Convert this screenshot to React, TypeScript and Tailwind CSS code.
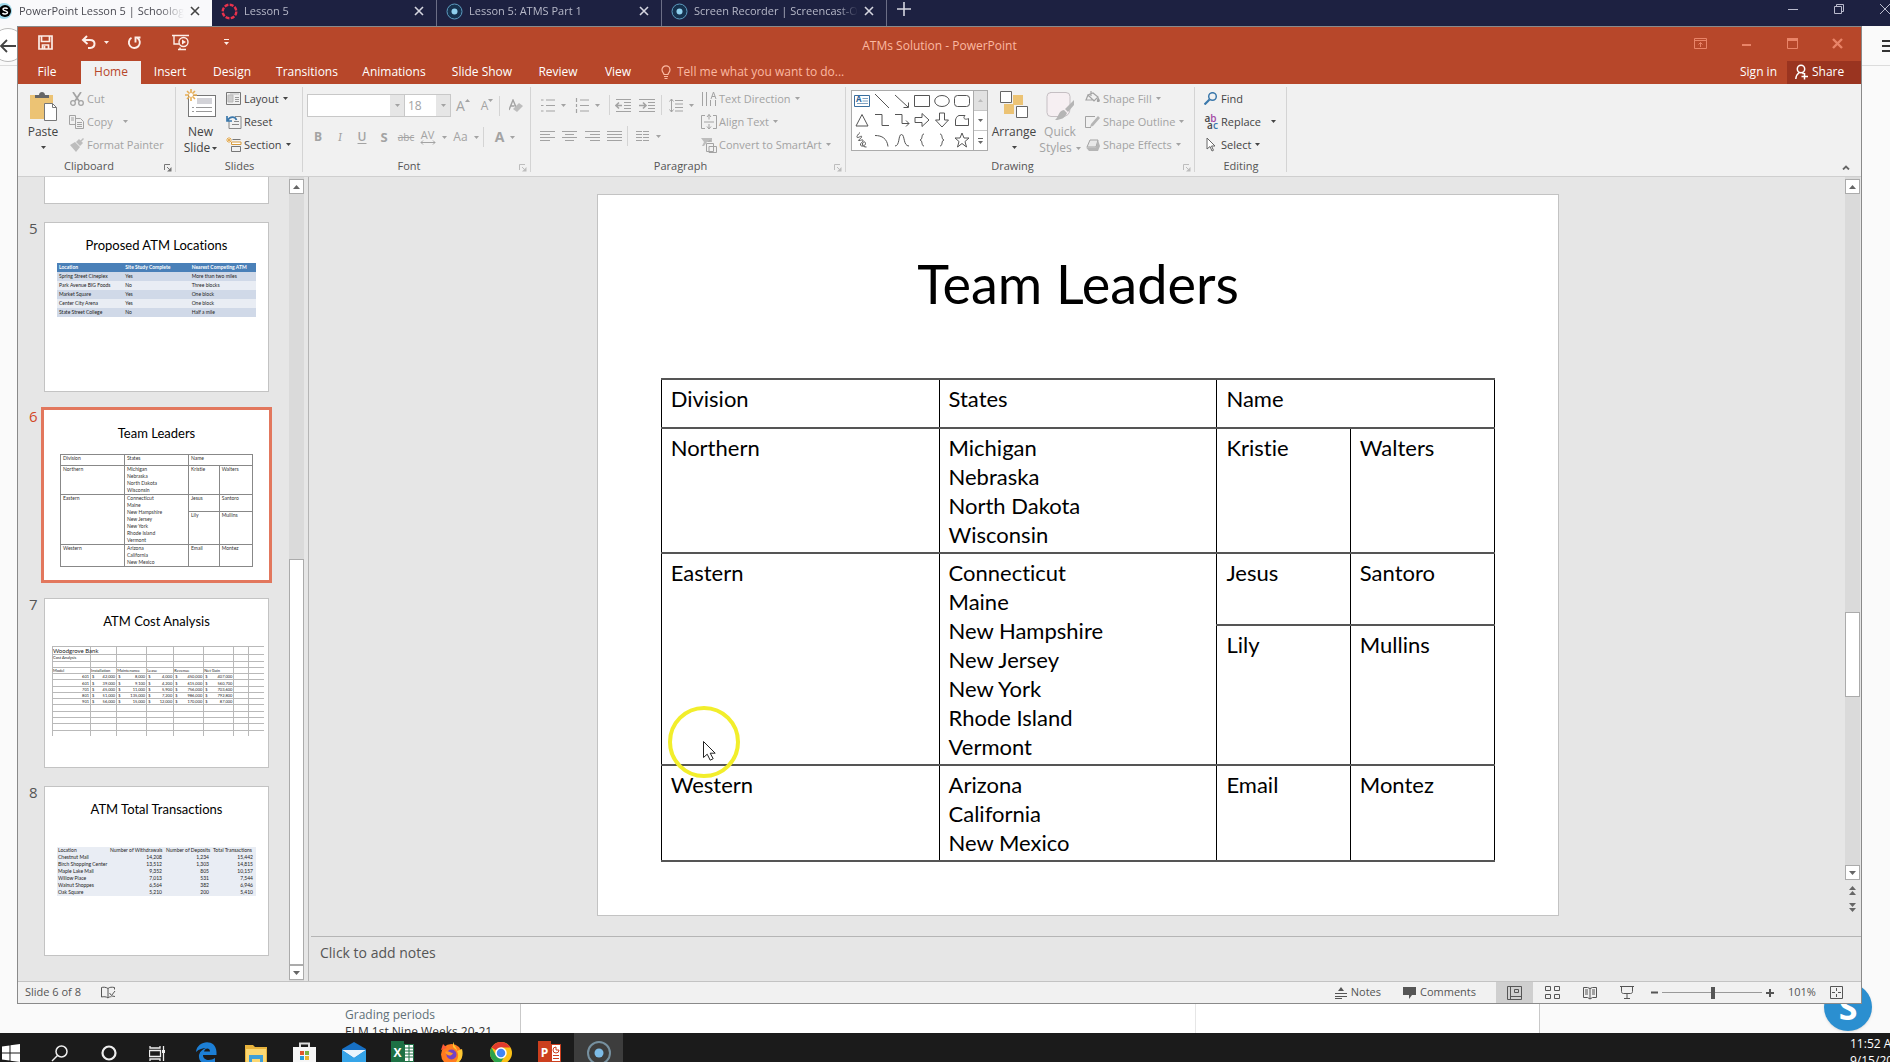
import React from "react";

type Kids = { children?: React.ReactNode };

/* ---------- drawing helpers ---------- */

function Svg({ w, h, children, className = "" }: Kids & { w: number; h: number; className?: string }) {
  return (
    <svg
      width={w}
      height={h}
      viewBox={`0 0 ${w} ${h}`}
      fill="none"
      stroke="currentColor"
      aria-hidden="true"
      className={`shrink-0 ${className}`}
    >
      {children}
    </svg>
  );
}

const Caret = ({ className = "" }: { className?: string }) => (
  <Svg w={5} h={3} className={className}>
    <path d="M0 0h5L2.500 3z" fill="currentColor" stroke="none" />
  </Svg>
);

const Launcher = ({ dim = false }: { dim?: boolean }) => (
  <button type="button" aria-label="More options" className={`absolute right-1 bottom-1 ${dim ? "text-[#bdbdbd]" : "text-[#777]"}`}>
    <Svg w={8} h={8}>
      <path d="M.5 6V.5H6M3 3l3 3" />
      <path d="M7.500 3v4.500H3z" fill="currentColor" stroke="none" />
    </Svg>
  </button>
);

/* ---------- browser chrome ---------- */

const ScreencastIcon = () => (
  <Svg w={17} h={17}>
    <circle cx="8.500" cy="8.500" r="7.500" fill="#16324f" stroke="#5d9cc0" />
    <circle cx="8.500" cy="8.500" r="3" fill="#8fd0ee" stroke="none" />
  </Svg>
);

function BrowserTab({ icon, title, active = false }: { icon: React.ReactNode; title: string; active?: boolean }) {
  return (
    <div
      className={`flex h-full items-center pb-1 ${
        active ? "w-[212px] bg-[#f9f9fb] text-[#4a4a52]" : "w-[225px] border-r border-[#6b6e86] pl-[9px] text-[#b6b8c8]"
      }`}
    >
      {icon}
      <button
        type="button"
        className={`ml-1.5 flex-1 overflow-hidden text-left text-[11px] leading-4 whitespace-nowrap ${
          active ? "[mask-image:linear-gradient(to_right,black_85%,transparent)]" : "[mask-image:linear-gradient(to_right,black_88%,transparent)]"
        }`}
      >
        {title}
      </button>
      <button type="button" aria-label={`Close ${title}`} className={`mr-3 ml-1.5 ${active ? "text-[#444]" : "text-[#d5d6e0]"}`}>
        <Svg w={10} h={10}>
          <path d="M1 1l8 8M9 1L1 9" strokeWidth="1.600" />
        </Svg>
      </button>
    </div>
  );
}

function BrowserTabs() {
  return (
    <header className="flex h-[26px] shrink-0 items-stretch bg-[#1d2141]">
      <BrowserTab
        active
        title="PowerPoint Lesson 5 | Schoology"
        icon={
          <Svg w={13} h={16}>
            <circle cx="4" cy="8" r="8" fill="#9fd8ea" stroke="none" />
            <circle cx="5" cy="8" r="6" fill="#000" stroke="none" />
            <path d="M7.500 6C7 5 3 4.500 3 6.300S7.500 7.700 7.500 9.500 3.500 11.500 2.500 10" stroke="#fff" strokeWidth="1.500" />
          </Svg>
        }
      />
      <BrowserTab
        title="Lesson 5"
        icon={
          <Svg w={17} h={17}>
            <circle cx="8.500" cy="8.500" r="6.800" stroke="#e8324c" strokeWidth="2.400" strokeDasharray="4 1.340" />
          </Svg>
        }
      />
      <BrowserTab title="Lesson 5: ATMS Part 1" icon={<ScreencastIcon />} />
      <BrowserTab title="Screen Recorder | Screencast-O-Matic" icon={<ScreencastIcon />} />
      <button type="button" aria-label="New tab" className="mb-2 ml-2.5 text-[#d5d6e0]">
        <Svg w={14} h={14}>
          <path d="M7 0v14M0 7h14" strokeWidth="1.600" />
        </Svg>
      </button>
      <div className="ml-auto flex items-center gap-9 overflow-hidden pb-2 text-[#b9bbcd]">
        <button type="button" aria-label="Minimize browser">
          <Svg w={10} h={10}>
            <path d="M0 5.500h10" />
          </Svg>
        </button>
        <button type="button" aria-label="Restore browser">
          <Svg w={10} h={10}>
            <path d="M.5 2.500h7v7h-7zM2.500 2.500v-2h7v7h-2" />
          </Svg>
        </button>
        <button type="button" aria-label="Close browser">
          <Svg w={10} h={10}>
            <path d="M0 0l10 10M10 0L0 10" />
          </Svg>
        </button>
      </div>
    </header>
  );
}

/* ---------- PowerPoint title bar and tabs ---------- */

function TitleBar() {
  return (
    <div className="relative flex h-[34px] items-center bg-[#b7472a] text-[#fdeee8]">
      <div className="flex items-center pb-[3px] pl-5">
        <button type="button" aria-label="Save">
          <Svg w={15} h={15}>
            <path d="M1 1h13v13H1zM3.500 1v5.500h8V1M4.500 14v-4h6v4M6.500 14v-3" strokeWidth="1.700" />
          </Svg>
        </button>
        <button type="button" aria-label="Undo" className="ml-7">
          <Svg w={15} h={15}>
            <path d="M6 1L2 5l4.500 4M2.500 5H9c6 0 6 7.500 0 8H7" strokeWidth="2" />
          </Svg>
        </button>
        <button type="button" aria-label="Undo history" className="ml-2">
          <Caret />
        </button>
        <button type="button" aria-label="Repeat" className="ml-[18px]">
          <Svg w={15} h={15}>
            <path d="M4.500 2.800A5.500 5.500 0 1 0 10.500 3M8.500 7.500V2.500h5" strokeWidth="1.900" />
          </Svg>
        </button>
        <button type="button" aria-label="Start from beginning" className="ml-[30px]">
          <Svg w={18} h={17}>
            <path d="M0 1.500h17M2 2v8h5M6 15.500h8M8 13.500v2" strokeWidth="1.400" />
            <circle cx="11.500" cy="8" r="4.500" strokeWidth="1.400" />
            <path d="M10 5.500v5l4-2.500z" fill="currentColor" stroke="none" />
          </Svg>
        </button>
        <button type="button" aria-label="Customize Quick Access Toolbar" className="ml-[34px]">
          <Svg w={5} h={7}>
            <path d="M0 .5h5" />
            <path d="M0 3h5L2.500 6z" fill="currentColor" stroke="none" />
          </Svg>
        </button>
      </div>
      <p className="pointer-events-none absolute inset-x-0 top-[11px] text-center text-[12px] leading-4 text-[#fbb9a2]">
        ATMs Solution - PowerPoint
      </p>
      <div className="ml-auto flex items-center gap-[34px] pr-[18px] pb-0.5 text-[#e98468]">
        <button type="button" aria-label="Ribbon display options">
          <Svg w={13} h={11}>
            <path d="M.5 .5h12v10H.5zM.5 2.500h12M6.500 9V4.500M4.500 6.500l2-2 2 2" />
          </Svg>
        </button>
        <button type="button" aria-label="Minimize">
          <Svg w={12} h={11}>
            <path d="M1 7h9" strokeWidth="2" />
          </Svg>
        </button>
        <button type="button" aria-label="Maximize">
          <Svg w={11} h={11}>
            <path d="M.5 .5h10v10H.5z" />
            <path d="M0 1.500h11" strokeWidth="3" />
          </Svg>
        </button>
        <button type="button" aria-label="Close">
          <Svg w={11} h={11}>
            <path d="M1 1l9 9M10 1L1 10" strokeWidth="2.400" />
          </Svg>
        </button>
      </div>
    </div>
  );
}

function RibbonTabs() {
  const tab = "flex h-full items-center justify-center";
  return (
    <nav className="flex h-6 items-stretch bg-[#b7472a] text-[12px] text-white">
      <button type="button" className={`${tab} ml-[3px] w-[52px]`}>File</button>
      <button type="button" className={`${tab} ml-2 w-[60px] bg-[#f1f1f1] text-[#b7472a]`}>Home</button>
      <button type="button" className={`${tab} w-[58px]`}>Insert</button>
      <button type="button" className={`${tab} w-[66px]`}>Design</button>
      <button type="button" className={`${tab} w-[84px]`}>Transitions</button>
      <button type="button" className={`${tab} w-[90px]`}>Animations</button>
      <button type="button" className={`${tab} w-[86px]`}>Slide Show</button>
      <button type="button" className={`${tab} w-[66px]`}>Review</button>
      <button type="button" className={`${tab} w-[54px]`}>View</button>
      <label className="ml-4 flex items-center gap-1.5 text-[#fbb9a2]">
        <Svg w={10} h={14}>
          <path d="M3 9.500C3 8 1 7.500 1 4.800a4 4 0 0 1 8 0C9 7.500 7 8 7 9.500zM3 11.500h4M3.500 13.500h3" strokeWidth="1.200" />
        </Svg>
        <input
          type="text"
          aria-label="Tell me what you want to do"
          placeholder="Tell me what you want to do..."
          className="w-48 bg-transparent outline-none placeholder:text-[#fbb9a2] placeholder:opacity-100"
        />
      </label>
      <button type="button" className="ml-auto px-2.5">Sign in</button>
      <button type="button" className="flex w-[74px] items-center gap-1 bg-[#9a3420] pl-2">
        <Svg w={13} h={16}>
          <circle cx="6" cy="5" r="3.700" strokeWidth="1.500" />
          <path d="M.8 15c.2-3.500 1.500-5 3.400-6.500M7.500 9l1 1M9.500 9v6.500M6.500 12.500h6.500" strokeWidth="1.500" />
        </Svg>
        Share
      </button>
    </nav>
  );
}

/* ---------- ribbon ---------- */

function Group({ label, width, children, launcher }: Kids & { label: string; width: string; launcher?: "on" | "dim" }) {
  return (
    <section aria-label={label} className={`relative flex h-full shrink-0 flex-col ${width}`}>
      <div className="flex h-[71px] items-stretch">{children}</div>
      <h2 className={`text-center leading-5 text-[#555] ${launcher ? "pr-4" : ""}`}>{label}</h2>
      {launcher && <Launcher dim={launcher === "dim"} />}
      <span className="absolute top-0 right-0 bottom-1 w-px bg-[#d4d4d4]" />
    </section>
  );
}

function Small({ icon, label, off = false, caret = false, wide = false }: { icon: React.ReactNode; label: string; off?: boolean; caret?: boolean; wide?: boolean }) {
  return (
    <button type="button" className={`flex h-[23px] items-center whitespace-nowrap ${off ? "text-[#a3a3a3]" : "text-[#444]"}`}>
      <span className="mr-0.5 flex w-[17px] justify-center">{icon}</span>
      {label}
      {caret && <Caret className={wide ? "ml-2.5" : "ml-1"} />}
    </button>
  );
}

const Sep = () => <span className="h-5 w-px bg-[#d4d4d4]" />;

function Tool({ label, width, children, caret = false }: Kids & { label: string; width: string; caret?: boolean }) {
  return (
    <button type="button" aria-label={label} className={`flex h-5 items-center justify-center ${width}`}>
      {children}
      {caret && <Caret className="ml-1.5" />}
    </button>
  );
}

const Lines = ({ d }: { d: string }) => (
  <Svg w={15} h={12}>
    <path d={d} />
  </Svg>
);

const galleryShapes: React.ReactNode[] = [
  <g key="a"><path d="M.5 2.500h15v11H.5z" stroke="#3b6f9e" /><path d="M8.500 5.500H14M8.500 8H14M3 10.500h11" stroke="#7fa3c4" /><text x="2" y="9" fontSize="8" fontWeight="700" fill="#2b5f93" stroke="none">A</text></g>,
  <path key="b" d="M1 1l14 14" />,
  <path key="c" d="M1 2l13 12M14.500 9.500v5h-5" />,
  <path key="d" d="M.5 2.500h15v11H.5z" />,
  <ellipse key="e" cx="8" cy="8" rx="7.300" ry="5.500" />,
  <rect key="f" x=".5" y="2.500" width="15" height="11" rx="3" />,
  <path key="g" d="M8 2.500L14 14H2z" />,
  <path key="h" d="M1 2.500h7v11h7" />,
  <path key="i" d="M1 2.500h7v9h7M12 8.500l3 3-3 3" />,
  <path key="j" d="M1 5.500h7V1.500L15 8l-7 6.500v-4H1z" />,
  <path key="k" d="M5.500 1v7H1.500L8 15l6.500-7h-4V1z" />,
  <path key="l" d="M5 3.500h6C8 7 12 8 14.500 6.500v7h-13V8C2 6 3 4 5 3.500z" />,
  <path key="m" d="M6 .5C3 3 2 6 4 5.500S8 3 7.500 5 3 8.500 5 8.500s4-1.500 4 0-3 2.500-2.500 4.500 5 1 5-1.500-3-2-3 .5 2 3 4 3" />,
  <path key="n" d="M1 3.500c7 0 12 3 13 11" />,
  <path key="o" d="M1 14C6 14 4 2.500 7.500 2.500S9 14 15 14" />,
  <path key="p" d="M10 2C7 2 9 7.500 6 8c3 .5 1 6 4 6" />,
  <path key="q" d="M6 2c3 0 1 5.500 4 6-3 .5-1 6-4 6" />,
  <path key="r" d="M8 1l2 5h5l-4 3.500 1.500 5.500L8 11.500 3.500 15 5 9.500 1 6h5z" />,
];

function Ribbon() {
  return (
    <div className="flex h-[93px] shrink-0 items-start border-b border-[#cfcfcf] bg-[#f1f1f1] pt-[3px] text-[11px] leading-4 text-[#444]">
      <Group label="Clipboard" width="w-[158px]" launcher="on">
        <button type="button" className="flex w-[50px] flex-col items-center pt-1">
          <Svg w={29} h={31}>
            <rect x="1" y="4" width="23" height="24" fill="#ecc374" stroke="none" />
            <path d="M6 7V4h4c0-4 6-4 6 0h4v3z" fill="#666" stroke="none" />
            <path d="M15.500 12.500h8l4 4v13h-12z" fill="#fff" stroke="#777" />
            <path d="M23.500 12.500v4h4" stroke="#777" />
          </Svg>
          <span className="mt-0.5 text-[12px]">Paste</span>
          <Caret className="mt-1.5" />
        </button>
        <div className="flex flex-col">
          <Small off label="Cut" icon={<Svg w={14} h={14}><path d="M3 0l6 9M11 0L5 9" strokeWidth="1.700" /><circle cx="3" cy="11" r="2.300" strokeWidth="1.300" /><circle cx="11" cy="11" r="2.300" strokeWidth="1.300" /></Svg>} />
          <Small off caret wide label="Copy" icon={<Svg w={15} h={14}><path d="M.5 .5h6v9h-6zM6.500 3.500h5l3 3v7h-8zM8 7.500h5M8 9.500h5M8 11.500h5M2 3h3M2 5h3" /></Svg>} />
          <Small off label="Format Painter" icon={<Svg w={14} h={14}><path d="M0 7l5-3 5 5-4 5zM6 4l3-3 4 4-3 3zM10 3l3-3 1 1-3 3z" fill="#bdbdbd" stroke="none" /></Svg>} />
        </div>
      </Group>
      <Group label="Slides" width="w-[127px]">
        <button type="button" className="flex w-[49px] flex-col items-center pt-0.5">
          <Svg w={31} h={29}>
            <rect x="3.500" y="6.500" width="27" height="21" fill="#fff" stroke="#777" />
            <path d="M12 9h15v6H12z" fill="#d3d3d8" stroke="none" />
            <path d="M7 18.500h2M11 18.500h16M7 22.500h2M11 22.500h16" stroke="#999" />
            <path d="M6 0v12M0 6h12M2 2l8 8M10 2l-8 8" stroke="#e7ae55" strokeWidth="1.600" />
            <circle cx="6" cy="6" r="2" fill="#fff" stroke="none" />
          </Svg>
          <span className="mt-1.5 text-[12px]">New</span>
          <span className="flex items-center gap-0.5 text-[12px] whitespace-nowrap">Slide<Caret /></span>
        </button>
        <div className="flex flex-col">
          <Small caret label="Layout" icon={<Svg w={15} h={13}><path d="M.5 .5h14v12H.5z" stroke="#777" /><path d="M2 3h5v7H2zM4 2h9" fill="#ccc" stroke="#bbb" /><path d="M9 5.500h4M9 7.500h4M9 9.500h4" stroke="#999" /></Svg>} />
          <Small label="Reset" icon={<Svg w={16} h={14}><path d="M3 6v7.500h12V1.500H9M8 6.500h5M6 9.500h7" stroke="#888" /><path d="M1 1v5h5M1.500 5.500C4 1 9 1 10.500 5" stroke="#3b78ab" strokeWidth="1.700" /></Svg>} />
          <Small caret label="Section" icon={<Svg w={16} h={15}><path d="M6.500 2.500h8M5.500 9.500h9v5h-9z" stroke="#777" /><path d="M5.500 5h9.500v2.500H5.500z" fill="#fff" stroke="#d89b3c" /><path d="M3 0v6M0 3h6M1 1l4 4M5 1L1 5" stroke="#e7ae55" /></Svg>} />
        </div>
      </Group>
      <Group label="Font" width="w-[228px]" launcher="dim">
        <div className="flex flex-col gap-2.5 pt-[7px] pl-1 text-[12px] text-[#a3a3a3]">
          <div className="flex h-[23px] items-center">
            <div className="flex h-full w-[98px] border border-[#c8c8c8] bg-white">
              <input aria-label="Font name" className="w-full min-w-0 bg-transparent px-1 outline-none" />
              <button type="button" aria-label="Font list" className="flex w-3.5 shrink-0 items-center justify-center bg-[#e6e6e6]"><Caret /></button>
            </div>
            <div className="flex h-full w-[46px] border border-l-0 border-[#c8c8c8] bg-white">
              <input aria-label="Font size" defaultValue="18" className="w-full min-w-0 bg-transparent px-[3px] outline-none" />
              <button type="button" aria-label="Size list" className="flex w-3.5 shrink-0 items-center justify-center bg-[#e6e6e6]"><Caret /></button>
            </div>
            <Tool label="Increase font size" width="w-6"><span className="text-[14px]">A</span><Caret className="mb-2.5 rotate-180" /></Tool>
            <Tool label="Decrease font size" width="w-6"><span className="text-[12px]">A</span><Caret className="mb-2.5" /></Tool>
            <Sep />
            <Tool label="Clear formatting" width="w-8"><Svg w={14} h={14}><path d="M0 11L4 1l3 7M1.500 7h4" strokeWidth="1.400" /><path d="M4 10l6-6 4 3-6 6z" fill="#bdbdbd" stroke="none" /></Svg></Tool>
          </div>
          <div className="flex h-5 items-center">
            <Tool label="Bold" width="w-[22px]"><b>B</b></Tool>
            <Tool label="Italic" width="w-[22px]"><i className="font-serif">I</i></Tool>
            <Tool label="Underline" width="w-[22px]"><span className="font-semibold underline underline-offset-2">U</span></Tool>
            <Tool label="Text shadow" width="w-[22px]"><b className="text-[13px]">S</b></Tool>
            <Tool label="Strikethrough" width="w-[22px]"><span className="text-[10px] line-through">abc</span></Tool>
            <Tool label="Character spacing" width="w-8" caret><span className="flex flex-col items-center text-[11px] leading-[10px]">AV<Svg w={16} h={5}><path d="M1 2.500h14M3 .5l-2 2 2 2M13 .5l2 2-2 2" /></Svg></span></Tool>
            <Tool label="Change case" width="w-[34px]" caret>Aa</Tool>
            <Sep />
            <Tool label="Font color" width="w-[42px]" caret><b className="text-[14px]">A</b></Tool>
          </div>
        </div>
      </Group>
      <Group label="Paragraph" width="w-[315px]" launcher="dim">
        <div className="flex w-[169px] flex-col gap-[11px] pt-2 pl-1.5 text-[#a3a3a3]">
          <div className="flex h-5 items-center">
            <Tool label="Bullets" width="w-[34px]" caret><Svg w={14} h={15}><path d="M5 2h9M5 7.500h9M5 13h9M0 2h2.500M0 7.500h2.500M0 13h2.500" strokeWidth="1.200" /></Svg></Tool>
            <Tool label="Numbering" width="w-[34px]" caret><Svg w={14} h={15}><path d="M5 2h9M5 7.500h9M5 13h9M1.500 0v4M1.500 6v3M1.500 11v4" strokeWidth="1.200" /></Svg></Tool>
            <span className="ml-1 flex"><Sep /></span>
            <Tool label="Decrease indent" width="w-7"><Svg w={16} h={14}><path d="M1 1.500h15M9 4.500h7M9 7.500h7M9 10.500h7M1 13.500h15" /><path d="M7 7.500H1M4 4.500l-3 3 3 3" strokeWidth="1.600" /></Svg></Tool>
            <Tool label="Increase indent" width="w-5"><Svg w={16} h={14}><path d="M0 1.500h16M9 4.500h7M9 7.500h7M9 10.500h7M0 13.500h16" /><path d="M0 7.500h7M4 4.500l3 3-3 3" strokeWidth="1.600" /></Svg></Tool>
            <span className="ml-1 flex"><Sep /></span>
            <Tool label="Line spacing" width="w-[38px]" caret><Svg w={14} h={15}><path d="M6 2.500h8M6 6h8M6 9.500h8M6 13h8M2.500 1v13M.5 3.500l2-2.500 2 2.500M.5 11.500l2 2.500 2-2.500" /></Svg></Tool>
          </div>
          <div className="flex h-5 items-center">
            <Tool label="Align left" width="w-[21px]"><Lines d="M0 1.500h15M0 4.500h10M0 7.500h15M0 10.500h10" /></Tool>
            <Tool label="Center" width="w-[23px]"><Lines d="M0 1.500h15M3 4.500h9M0 7.500h15M3 10.500h9" /></Tool>
            <Tool label="Align right" width="w-[22px]"><Lines d="M0 1.500h15M5 4.500h10M0 7.500h15M5 10.500h10" /></Tool>
            <Tool label="Justify" width="w-[22px]"><Lines d="M0 1.500h15M0 4.500h15M0 7.500h15M0 10.500h15" /></Tool>
            <span className="mx-0.5 flex"><Sep /></span>
            <Tool label="Columns" width="w-9" caret><Lines d="M1 1.500h6M8 1.500h6M1 4.500h6M8 4.500h6M1 7.500h6M8 7.500h6M1 10.500h6M8 10.500h6" /></Tool>
          </div>
        </div>
        <div className="flex flex-col">
          <Small off caret label="Text Direction" icon={<Svg w={16} h={16}><path d="M1.500 1v14M5.500 1v14M10 8l2.500-7L15 8M11 5.500h3M9.500 9v6M14.500 9v6" /></Svg>} />
          <Small off caret label="Align Text" icon={<Svg w={16} h={16}><path d="M4 1.500H.5v13H4M12 1.500h3.500v13H12M3 8h10M8 .5v5M6 3l2-2.500L10 3M8 10v5M6 12.500l2 2.500 2-2.500" /></Svg>} />
          <Small off caret label="Convert to SmartArt" icon={<Svg w={16} h={16}><path d="M0 1h11v4H6L3 9H1l2-4z" fill="#bdbdbd" stroke="none" /><path d="M5.500 6.500h7v8h-7zM8 5v-1h2M8 9.500h7.500v6H8z" fill="#f1f1f1" /></Svg>} />
        </div>
      </Group>
      <Group label="Drawing" width="w-[349px]" launcher="dim">
        <div className="mt-[3px] ml-[5px] flex h-[61px] border border-[#ababab] bg-white">
          <div className="grid grid-cols-6">
            {galleryShapes.map((shape, i) => (
              <button key={i} type="button" aria-label={`Shape ${i + 1}`} className="flex w-5 items-center justify-center text-[#555]">
                <Svg w={16} h={16}>{shape}</Svg>
              </button>
            ))}
          </div>
          <div className="ml-px flex w-3.5 flex-col border-l border-[#ababab] text-[#666]">
            <button type="button" aria-label="Previous shapes" className="flex flex-1 items-center justify-center bg-[#e1e1e1] text-[#bbb]"><Caret className="rotate-180" /></button>
            <button type="button" aria-label="Next shapes" className="flex flex-1 items-center justify-center border-y border-[#c6c6c6]"><Caret /></button>
            <button type="button" aria-label="All shapes" className="flex flex-1 items-center justify-center"><Svg w={5} h={6}><path d="M0 .5h5" /><path d="M0 3h5L2.500 6z" fill="currentColor" stroke="none" /></Svg></button>
          </div>
        </div>
        <button type="button" className="ml-1 flex w-[44px] flex-col items-center pt-1">
          <Svg w={28} h={28}>
            <path d="M13 4h10v10H13zM4 13h10v10H4z" fill="#ecc374" stroke="none" />
            <path d="M.5 .5h11v11H.5zM16.500 15.500h11v11h-11z" fill="#fff" stroke="#666" />
          </Svg>
          <span className="mt-[5px] text-[12px]">Arrange</span>
          <Caret className="mt-1.5" />
        </button>
        <button type="button" className="flex w-[48px] flex-col items-center pt-1 text-[12px] text-[#a3a3a3]">
          <Svg w={30} h={30}>
            <path d="M5 1.500h16q4 0 4 4v12q0 8-8 8H6q-4 0-4-4v-16q0-4 4-4z" fill="#f6eff2" stroke="#c5bfc3" />
            <path d="M29 9v5l-6 7-3-3zM19 19l3 3c-2 5-6 7-12 7 4-3 3-9 9-10z" fill="#b5b5b5" stroke="none" />
          </Svg>
          <span className="mt-[3px]">Quick</span>
          <span className="flex items-center gap-1">Styles<Caret /></span>
        </button>
        <div className="flex flex-col">
          <Small off caret label="Shape Fill" icon={<Svg w={15} h={15}><path d="M3 4l6 6 4-4-5-4zM3 4L1 9h8M6 0v5" strokeWidth="1.200" /><path d="M13 6c3 4 2 5 0 5s-1-2 0-5z" fill="currentColor" stroke="none" /></Svg>} />
          <Small off caret label="Shape Outline" icon={<Svg w={16} h={14}><path d="M10 1.500H.5v11H6" /><path d="M6 9l7-8 2 2-7 8-3 1z" fill="#b5b5b5" stroke="none" /></Svg>} />
          <Small off caret label="Shape Effects" icon={<Svg w={15} h={14}><path d="M2 9l3-7h8l-2 7z" fill="#e8e8e8" /><path d="M1 9.500h10l2-7.500 2 6-2 5H4z" fill="#b5b5b5" stroke="none" /></Svg>} />
        </div>
      </Group>
      <Group label="Editing" width="w-[92px]">
        <div className="flex flex-col pl-[7px]">
          <Small label="Find" icon={<Svg w={14} h={13}><circle cx="8.500" cy="4.500" r="3.800" stroke="#3b78ab" strokeWidth="1.500" /><path d="M5.500 7.500l-5 5" stroke="#3b78ab" strokeWidth="2.200" /></Svg>} />
          <Small caret wide label="Replace" icon={<span className="flex flex-col text-[10px] leading-[7px] font-semibold"><span>a<span className="text-[#a349a4]">b</span></span><span className="pl-1">a<span className="text-[#3b78ab]">c</span></span></span>} />
          <Small caret label="Select" icon={<Svg w={10} h={15}><path d="M1 1v11l3-2.500L6 14l1.500-.7L5.500 9H9z" fill="#fff" stroke="#666" /></Svg>} />
        </div>
      </Group>
      <button type="button" aria-label="Collapse the ribbon" className="mt-auto mr-[11px] mb-1.5 ml-auto text-[#666]">
        <Svg w={8} h={5}><path d="M1 4.500l3-3 3 3" strokeWidth="1.800" /></Svg>
      </button>
    </div>
  );
}

/* ---------- slides ---------- */

const leaders = [
  { division: "Northern", states: ["Michigan", "Nebraska", "North Dakota", "Wisconsin"], people: [["Kristie", "Walters"]] },
  {
    division: "Eastern",
    states: ["Connecticut", "Maine", "New Hampshire", "New Jersey", "New York", "Rhode Island", "Vermont"],
    people: [["Jesus", "Santoro"], ["Lily", "Mullins"]],
  },
  { division: "Western", states: ["Arizona", "California", "New Mexico"], people: [["Email", "Montez"]] },
];

function LeadersTable({ small = false }: { small?: boolean }) {
  const cell = small
    ? "border border-[#888] px-0.5 align-top font-normal"
    : "border-x border-y-2 border-x-black border-y-[#555] px-[9px] pt-1 pb-[3px] align-top font-normal";
  return (
    <table className={`w-full table-fixed border-collapse text-left ${small ? "text-[5px] leading-[7px] text-[#333]" : "text-[22px] leading-[29px] text-black"}`}>
      <colgroup>
        <col className="w-1/3" />
        <col className="w-1/3" />
        <col className="w-[16%]" />
        <col />
      </colgroup>
      <thead>
        <tr className={small ? "h-[11px]" : "h-[49px]"}>
          <th className={cell}>Division</th>
          <th className={cell}>States</th>
          <th className={cell} colSpan={2}>Name</th>
        </tr>
      </thead>
      <tbody>
        {leaders.map((row) =>
          row.people.map((person, i) => (
            <tr key={person[0]} className={person[0] === "Jesus" ? (small ? "h-[17px]" : "h-[72px]") : ""}>
              {i === 0 && <td className={cell} rowSpan={row.people.length}>{row.division}</td>}
              {i === 0 && (
                <td className={cell} rowSpan={row.people.length}>
                  {row.states.map((s) => <div key={s}>{s}</div>)}
                </td>
              )}
              <td className={cell}>{person[0]}</td>
              <td className={cell}>{person[1]}</td>
            </tr>
          )),
        )}
      </tbody>
    </table>
  );
}

const locations = [
  ["Spring Street Cineplex", "Yes", "More than two miles"],
  ["Park Avenue BIG Foods", "No", "Three blocks"],
  ["Market Square", "Yes", "One block"],
  ["Center City Arena", "Yes", "One block"],
  ["State Street College", "No", "Half a mile"],
];

const LocationsTable = () => (
  <table className="w-full table-fixed border-collapse text-left text-[5px] leading-[9px] text-[#222]">
    <thead>
      <tr className="bg-[#4a80b8] text-white">
        {["Location", "Site Study Complete", "Nearest Competing ATM"].map((h) => (
          <th key={h} className="p-0 pl-0.5 whitespace-nowrap">{h}</th>
        ))}
      </tr>
    </thead>
    <tbody>
      {locations.map((r) => (
        <tr key={r[0]} className="odd:bg-[#d0d9e8] even:bg-[#e9edf4]">
          {r.map((c, i) => <td key={i} className="p-0 pl-0.5 whitespace-nowrap">{c}</td>)}
        </tr>
      ))}
    </tbody>
  </table>
);

const costs = [
  ["Woodgrove Bank"],
  ["Cost Analysis"],
  [],
  ["Model", "Installation", "Maintenance", "Lease", "Revenue", "Net Gain"],
  ["601", "42,000", "8,000", "4,000", "450,000", "407,000"],
  ["601", "39,000", "9,100", "4,200", "615,000", "560,700"],
  ["701", "45,000", "11,000", "5,900", "756,000", "703,600"],
  ["801", "51,000", "135,000", "7,200", "986,000", "792,800"],
  ["901", "56,000", "15,000", "12,000", "170,000", "87,000"],
  [], [], [], [], [],
];

const CostTable = () => (
  <table className="h-[90px] w-full table-fixed border-collapse text-[4px] leading-[5px] text-[#222]">
    <colgroup>
      <col className="w-[38px]" /><col className="w-[26px]" /><col className="w-[30px]" /><col className="w-[27px]" />
      <col className="w-[30px]" /><col className="w-[30px]" /><col className="w-[15px]" /><col className="w-[15px]" />
    </colgroup>
    <tbody>
      {costs.map((row, r) => (
        <tr key={r}>
          {Array.from({ length: 8 }, (_, c) => (
            <td key={c} className="border-t border-l border-[#b9b9b9] p-0 whitespace-nowrap">
              <div
                className={`flex items-center pr-px ${r > 3 ? (c ? "justify-between" : "justify-end") : ""} ${
                  r === 0 ? "h-[7px] text-[6px]" : "h-[5px]"
                }`}
              >
                {r > 3 && c > 0 && row[c] && <span className="pl-px">$</span>}
                <span>{row[c]}</span>
              </div>
            </td>
          ))}
        </tr>
      ))}
    </tbody>
  </table>
);

const totals = [
  ["Chestnut Mall", "14,208", "1,234", "15,442"],
  ["Birch Shopping Center", "13,512", "1,303", "14,815"],
  ["Maple Lake Mall", "9,352", "805", "10,157"],
  ["Willow Place", "7,013", "531", "7,544"],
  ["Walnut Shoppes", "6,564", "382", "6,946"],
  ["Oak Square", "5,210", "200", "5,410"],
];

const TotalsTable = () => (
  <table className="w-full table-fixed border-collapse bg-[#e9edf4] text-[5px] leading-[7px] text-[#222]">
    <colgroup>
      <col className="w-[52px]" /><col className="w-[56px]" /><col className="w-[47px]" /><col className="w-[44px]" />
    </colgroup>
    <thead>
      <tr>
        {["Location", "Number of Withdrawals", "Number of Deposits", "Total Transactions"].map((h) => (
          <th key={h} className="p-0 pl-px text-left font-normal whitespace-nowrap">{h}</th>
        ))}
      </tr>
    </thead>
    <tbody>
      {totals.map((r) => (
        <tr key={r[0]}>
          {r.map((c, i) => (
            <td key={i} className={`p-0 whitespace-nowrap ${i ? "pr-[3px] text-right" : "pl-px"}`}>{c}</td>
          ))}
        </tr>
      ))}
    </tbody>
  </table>
);

function Thumb({ n, title, pad = "", selected = false, children }: Kids & { n: number; title: string; pad?: string; selected?: boolean }) {
  return (
    <li className="flex shrink-0 items-start">
      <span className={`w-[26px] pl-[11px] text-[15px] leading-3 ${selected ? "text-[#d24726]" : "text-[#555]"}`}>{n}</span>
      <div
        className={`flex h-[170px] w-[225px] flex-col bg-white font-['Lato',sans-serif] [font-variant-ligatures:none] ${
          selected ? "outline-3 outline-[#e2775d]" : "border border-[#c3c3c3]"
        }`}
      >
        <h3 className={`text-center text-[13px] leading-5 text-black ${selected ? "pt-[13px]" : "pt-3"}`}>{title}</h3>
        <div className={pad}>{children}</div>
      </div>
    </li>
  );
}

const arrowBtn = "flex h-[15px] w-[15px] shrink-0 items-center justify-center border border-[#ababab] bg-white text-[#666]";
const BigCaret = ({ up = false }: { up?: boolean }) => (
  <Svg w={7} h={4} className={up ? "rotate-180" : ""}><path d="M0 0h7L3.500 4z" fill="currentColor" stroke="none" /></Svg>
);

function Sidebar() {
  return (
    <aside aria-label="Slide thumbnails" className="flex w-[291px] shrink-0 border-r border-[#b5b5b5]">
      <ol className="flex min-h-0 flex-1 flex-col justify-end gap-[18px] overflow-hidden pb-[25px]">
        <Thumb n={4} title="" />
        <Thumb n={5} title="Proposed ATM Locations" pad="px-3 pt-2"><LocationsTable /></Thumb>
        <Thumb n={6} title="Team Leaders" selected pad="px-4 pt-[11px]"><LeadersTable small /></Thumb>
        <Thumb n={7} title="ATM Cost Analysis" pad="pl-[7px] pr-1 pt-[15px]"><CostTable /></Thumb>
        <Thumb n={8} title="ATM Total Transactions" pad="px-3 pt-7"><TotalsTable /></Thumb>
      </ol>
      <div className="mr-1 flex w-[15px] flex-col bg-[#dadada] pt-[2px] pb-px">
        <button type="button" aria-label="Scroll slides up" className={arrowBtn}><BigCaret up /></button>
        <div className="flex-[365]" />
        <div className="flex-[405] border border-[#ababab] bg-white" />
        <button type="button" aria-label="Scroll slides down" className={arrowBtn}><BigCaret /></button>
      </div>
    </aside>
  );
}

function Workspace() {
  return (
    <main className="flex min-w-0 flex-1 flex-col pl-0.5">
      <div className="flex min-h-0 flex-1">
        <div className="flex min-w-0 flex-1 justify-center pt-[17px] pb-5">
          <article className="relative flex aspect-[4/3] h-full flex-col border border-[#c3c3c3] bg-white px-[63px] font-['Lato',sans-serif] [font-variant-ligatures:none]">
            <h1 className="flex h-[183px] shrink-0 items-center justify-center pb-1.5 text-[54px] text-black">Team Leaders</h1>
            <LeadersTable />
            <span className="absolute top-[510px] left-[69px]">
              <Svg w={74} h={74}>
                <circle cx="37" cy="37" r="34" stroke="#f2ee2b" strokeWidth="4" />
                <path d="M36.500 36.500v16l3.700-3.300 3 6 3-1.500-3-5.500h5z" fill="#fff" stroke="#222" />
              </Svg>
            </span>
          </article>
        </div>
        <div className="mr-px flex w-[15px] flex-col bg-[#dadada] pt-0.5">
          <button type="button" aria-label="Scroll up" className={arrowBtn}><BigCaret up /></button>
          <div className="flex-[419]" />
          <div className="flex-[83] border border-[#ababab] bg-white" />
          <div className="flex-[169]" />
          <button type="button" aria-label="Scroll down" className={arrowBtn}><BigCaret /></button>
          <div className="flex h-14 shrink-0 flex-col items-center gap-2 bg-[#e6e6e6] pt-1.5 text-[#666]">
            <button type="button" aria-label="Previous slide"><Svg w={7} h={9}><path d="M0 4h7L3.500 0zM0 9h7L3.500 5z" fill="currentColor" stroke="none" /></Svg></button>
            <button type="button" aria-label="Next slide"><Svg w={7} h={9}><path d="M0 0h7L3.500 4zM0 5h7L3.500 9z" fill="currentColor" stroke="none" /></Svg></button>
          </div>
        </div>
      </div>
      <textarea
        aria-label="Notes"
        placeholder="Click to add notes"
        className="block h-[45px] shrink-0 resize-none border-t border-[#b5b5b5] bg-transparent px-[9px] pt-1.5 text-[14px] leading-5 outline-none placeholder:text-[#555] placeholder:opacity-100"
      />
    </main>
  );
}

function StatusBar() {
  return (
    <footer className="flex h-[22px] shrink-0 items-stretch border-t border-[#c3c3c3] bg-[#f1f1f1] text-[11px] text-[#555]">
      <span className="flex items-center pl-[7px]">Slide 6 of 8</span>
      <button type="button" aria-label="Spelling" className="ml-5">
        <Svg w={15} h={13}><path d="M7 2.500C5 1 2 1 .5 1.500v9.500c2-.5 5-.5 6.500 1M7 2.500v9.500M7 2.500C8.500 1 11 1 13.500 1.500v2M7 12c1-1 2-1.300 3.500-1.300M8.500 7l2 2.500L14 5M11 10l3 .5" /></Svg>
      </button>
      <div className="ml-auto flex items-stretch">
        <button type="button" className="flex items-center gap-1">
          <Svg w={12} h={12}><path d="M0 6.500h12M0 9.500h12M0 11.500h7" /><path d="M3 4h6L6 0z" fill="currentColor" stroke="none" /></Svg>
          Notes
        </button>
        <button type="button" className="ml-[22px] flex items-center gap-1">
          <Svg w={13} h={12}><path d="M0 0h13v8H9l-3 4V8H0z" fill="currentColor" stroke="none" /></Svg>
          Comments
        </button>
        <button type="button" aria-label="Normal view" className="ml-5 flex w-[37px] items-center justify-center bg-[#cfcfcf]">
          <Svg w={15} h={14}><path d="M.5 .5h14v13H.5zM3.500 .5v13M3.500 10.500h11M7.500 3.500h4v3h-4z" /></Svg>
        </button>
        <button type="button" aria-label="Slide sorter" className="flex w-[38px] items-center justify-center">
          <Svg w={15} h={13}><path d="M.5 .5h5v4h-5zM9.500 .5h5v4h-5zM.5 8.500h5v4h-5zM9.500 8.500h5v4h-5z" /></Svg>
        </button>
        <button type="button" aria-label="Reading view" className="flex w-[37px] items-center justify-center">
          <Svg w={14} h={14}><path d="M.5 1.500h4L7 2.500l2.500-1h4v10h-4L7 13l-2.500-1.500h-4zM7 2v11M2 4h3M2 6h3M2 8h3M9 4h3M9 6h3M9 8h3" /></Svg>
        </button>
        <button type="button" aria-label="Slide show" className="flex w-[38px] items-center justify-center">
          <Svg w={14} h={13}><path d="M0 .5h14M1.500 1v4.500c0 1.500 1 2 2 2h7c1 0 2-.5 2-2V1M7 8v4.500M4 12.500h6" /></Svg>
        </button>
        <button type="button" aria-label="Zoom out" className="flex w-4 items-center justify-center">
          <Svg w={7} h={7}><path d="M0 3.500h7" strokeWidth="2" /></Svg>
        </button>
        <input
          type="range"
          aria-label="Zoom"
          min={0}
          max={200}
          defaultValue={102}
          className="my-auto h-3.5 w-[100px] appearance-none bg-[linear-gradient(#999,#999)] bg-[length:100%_1px] bg-center bg-no-repeat [&::-webkit-slider-thumb]:h-3 [&::-webkit-slider-thumb]:w-1 [&::-webkit-slider-thumb]:appearance-none [&::-webkit-slider-thumb]:bg-[#555]"
        />
        <button type="button" aria-label="Zoom in" className="ml-0.5 flex w-3 items-center justify-center">
          <Svg w={8} h={8}><path d="M0 4h8M4 0v8" strokeWidth="2" /></Svg>
        </button>
        <button type="button" className="ml-3 w-[34px] text-left">101%</button>
        <button type="button" aria-label="Fit slide to window" className="mr-[18px] ml-2 flex items-center">
          <Svg w={13} h={13}><path d="M.5 .5h12v12H.5zM6.500 2v3M6.500 8v3M2 6.500h3M8 6.500h3" /></Svg>
        </button>
      </div>
    </footer>
  );
}

/* ---------- taskbar ---------- */

const taskIcons: { name: string; icon: React.ReactNode }[] = [
  { name: "Start", icon: <Svg w={18} h={18}><path d="M0 2.500L7.500 1.500V8.500H0zM8.500 1.300L18 0v8.500H8.500zM0 9.500h7.500v7L0 15.500zM8.500 9.500H18V18l-9.500-1.300z" fill="#fff" stroke="none" /></Svg> },
  { name: "Search", icon: <Svg w={17} h={17}><circle cx="10.500" cy="6.500" r="5.500" stroke="#eee" strokeWidth="1.500" /><path d="M6.500 10.500L1 16" stroke="#eee" strokeWidth="1.500" /></Svg> },
  { name: "Cortana", icon: <Svg w={16} h={16}><circle cx="8" cy="8" r="6.500" stroke="#eee" strokeWidth="2.200" /></Svg> },
  { name: "Task View", icon: <Svg w={17} h={17}><path d="M1 1v2h10V1M1 16v-2h10v2M.500 5.500h11v6H.5zM14.500 1v15" stroke="#eee" strokeWidth="1.300" /><path d="M14.500 5v3" stroke="#eee" strokeWidth="3" /></Svg> },
  { name: "Edge", icon: <Svg w={21} h={22}><path d="M0 10C1-2 20-4 20.500 10v3H7c0 6 8 6 12 3v4C12 24 2 22 3 13 4 9 7 7 10 6 7 6 3 7 0 10zM8 9.500h6c0-4-5-4-6 0z" fill="#1c7fd6" stroke="none" /></Svg> },
  { name: "File Explorer", icon: <Svg w={22} h={19}><path d="M0 1h8l2 2h12v16H0z" fill="#e8b33c" stroke="none" /><path d="M1 5h20v14H1z" fill="#fcd872" stroke="none" /><path d="M4 19v-8h14v8h-3v-4H7v4z" fill="#3f9fd8" stroke="none" /></Svg> },
  { name: "Store", icon: <Svg w={23} h={23}><path d="M7 6V1.500h9V6" stroke="#ddd" strokeWidth="2" /><path d="M0 5h23v18H0z" fill="#f6f6f6" stroke="none" /><path d="M7 9h4v4H7z" fill="#e2562c" stroke="none" /><path d="M12 9h4v4h-4z" fill="#7cb342" stroke="none" /><path d="M7 14h4v4H7z" fill="#2a9fd8" stroke="none" /><path d="M12 14h4v4h-4z" fill="#e9b52e" stroke="none" /></Svg> },
  { name: "Mail", icon: <Svg w={24} h={22}><path d="M0 7l12-7 12 7v15H0z" fill="#1770c4" stroke="none" /><path d="M0 8h24L12 16z" fill="#e9f4fc" stroke="none" /><path d="M0 8l12 8 12-8v14H0z" fill="#35a4e8" stroke="none" /></Svg> },
  { name: "Excel", icon: <span className="flex items-center"><span className="flex h-6 w-[13px] items-center justify-center bg-[#1d7044] text-[12px] font-bold text-white">X</span><Svg w={10} h={18}><path d="M.5 .5h9v17h-9zM.5 4h9M.5 7h9M.5 10h9M.5 13h9M5 1v16" fill="#fff" stroke="#1d7044" /></Svg></span> },
  { name: "Firefox", icon: <Svg w={23} h={23}><circle cx="11.500" cy="12.500" r="10.500" fill="#ff7a1f" stroke="none" /><path d="M14 0c-1 4 3 5 3 9l5-2c2 7-1 14-8 15 5-4 6-12 0-16-2-2-1-5 0-6z" fill="#ffc832" stroke="none" /><path d="M1 8L3 2l4 4z" fill="#ff5a36" stroke="none" /><circle cx="11.500" cy="12.500" r="5" fill="#7542c4" stroke="none" /><path d="M5 10c3-2 5 1 8 1-2 4-6 3-8-1z" fill="#ff9a26" stroke="none" /></Svg> },
  { name: "Chrome", icon: <Svg w={22} h={22}><circle cx="11" cy="11" r="11" fill="#fbc116" stroke="none" /><path d="M11 11L1.500 5.500A11 11 0 0 1 20.500 5.500H11z" fill="#e33b2e" stroke="none" /><path d="M1.500 5.500A11 11 0 0 0 10 22l5-8.500H6z" fill="#2ba24c" stroke="none" /><circle cx="11" cy="11" r="5" fill="#4285f4" stroke="#fff" strokeWidth="1.500" /></Svg> },
  { name: "PowerPoint", icon: <span className="flex items-center"><span className="flex h-6 w-[13px] items-center justify-center bg-[#cc3f1e] text-[12px] font-bold text-white">P</span><Svg w={10} h={18}><path d="M.5 .5h9v17h-9z" fill="#fff" stroke="#cc3f1e" /><path d="M5 3a3 3 0 1 0 3 3H5zM2 11.500h6M2 14.500h6" stroke="#cc3f1e" /></Svg></span> },
  { name: "Screencast-O-Matic", icon: <Svg w={24} h={24}><circle cx="12" cy="12" r="11" stroke="#76909f" strokeWidth="2" /><circle cx="12" cy="12" r="4.500" fill="#7dbbe6" stroke="none" /></Svg> },
];

function Taskbar() {
  return (
    <div className="relative z-20 h-[29px] shrink-0 overflow-hidden bg-[#1b1b1b]">
      <div className="flex h-10">
        <div className="-ml-[14px] flex">
          {taskIcons.map(({ name, icon }) => (
            <button
              key={name}
              type="button"
              aria-label={name}
              className={`flex w-[49px] items-center justify-center ${name === "Screencast-O-Matic" ? "bg-[#3d3d3d]" : ""}`}
            >
              {icon}
            </button>
          ))}
        </div>
        <div className="ml-auto w-10 overflow-hidden pt-0.5 text-[12px] leading-[17px] whitespace-nowrap text-white">
          <div>11:52 AM</div>
          <div>9/15/2020</div>
        </div>
      </div>
    </div>
  );
}

export default function App() {
  return (
    <div className="flex h-screen flex-col overflow-hidden bg-[#fafafa] font-['Open_Sans','Noto_Sans',sans-serif]">
      <BrowserTabs />
      <div className="flex min-h-0 flex-1">
        <div className="w-[17px] shrink-0">
          <div className="h-10 overflow-hidden border-b border-[#dcdcdc]">
            <button type="button" aria-label="Back" className="-ml-[10px] block text-[#444]">
              <Svg w={36} h={38}>
                <circle cx="18" cy="19" r="16.500" fill="#fff" stroke="#bbb" />
                <path d="M26 20H11M17 14l-6 6 6 6" strokeWidth="1.800" />
              </Svg>
            </button>
          </div>
        </div>
        <div className="relative z-10 flex min-w-0 flex-1 flex-col border border-[#8a8a8a] bg-[#e6e6e6]">
          <TitleBar />
          <div className="-mt-px">
            <RibbonTabs />
          </div>
          <Ribbon />
          <div className="flex min-h-0 flex-1">
            <Sidebar />
            <Workspace />
          </div>
          <StatusBar />
        </div>
        <div className="w-7 shrink-0">
          <div className="flex h-10 items-center overflow-hidden border-b border-[#dcdcdc]">
            <span className="ml-[5px] h-8 w-px bg-[#c9d3dc]" />
            <button type="button" aria-label="Browser menu" className="ml-[15px] text-[#333]">
              <Svg w={14} h={12}><path d="M0 1h14M0 6h14M0 11h14" strokeWidth="2" /></Svg>
            </button>
          </div>
        </div>
      </div>
      <div className="relative flex h-[29px] shrink-0 text-[12px] leading-[17px]">
        <div className="w-[521px] border-r border-[#c9c9c9] pt-0.5 pl-[345px] whitespace-nowrap">
          <div className="text-[#607078]">Grading periods</div>
          <div className="text-[#333]">ELM 1st Nine Weeks 20-21</div>
        </div>
        <div className="w-[675px] border-r border-[#e6e6e6] bg-white" />
        <div className="w-[344px] border-r border-[#c9c9c9] bg-white" />
        <button
          type="button"
          aria-label="Support"
          className="absolute -top-[21px] right-[18px] flex h-12 w-12 items-center justify-center rounded-full bg-[#2b8fd0] text-[34px] font-bold text-white shadow"
        >
          S
        </button>
      </div>
      <Taskbar />
    </div>
  );
}
